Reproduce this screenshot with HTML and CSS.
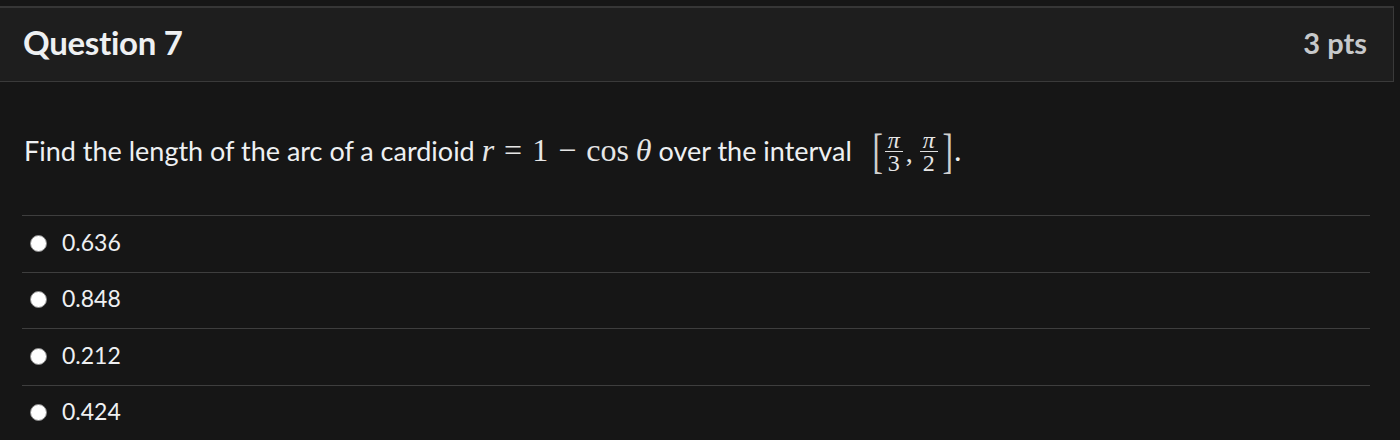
FILE: index.html
```html
<!DOCTYPE html>
<html>
<head>
<meta charset="utf-8">
<link rel="stylesheet" href="styles.css">
</head>
<body>
<div class="question">
  <div class="header">
    <h2 class="title">Question 7</h2>
    <span class="pts">3 pts</span>
  </div>
  <div class="content">
    <p class="text">Find the length of the arc of a cardioid <span class="math"><i>r</i><span class="op">=</span>1<span class="op">−</span>cos<span class="sp"></span><i>θ</i></span> over the interval <span class="math interval"><span class="brk brk-l">[</span><span class="frac"><span class="num"><i>π</i></span><span class="den">3</span></span><span class="comma">,</span><span class="frac"><span class="num"><i>π</i></span><span class="den">2</span></span><span class="brk brk-r">]</span></span><span class="dot">.</span></p>
    <div class="answers">
      <div class="answer"><span class="radio"></span><span class="label">0.636</span></div>
      <div class="answer"><span class="radio"></span><span class="label">0.848</span></div>
      <div class="answer"><span class="radio"></span><span class="label">0.212</span></div>
      <div class="answer"><span class="radio"></span><span class="label">0.424</span></div>
    </div>
  </div>
</div>
</body>
</html>
```
FILE: styles.css
```css
html, body {
  margin: 0;
  padding: 0;
  background: #161616;
  color: #ecedee;
  font-family: Lato, "Liberation Sans", sans-serif;
}
body {
  padding-top: 6px;
}
.question {
  width: 1394px;
}
.header {
  display: flex;
  align-items: center;
  justify-content: space-between;
  height: 76px;
  box-sizing: border-box;
  background: #1e1e1e;
  border-top: 2px solid #363636;
  border-bottom: 1px solid #3a3a3a;
  border-right: 1px solid #3a3a3a;
  padding: 0 26px 5px 23px;
}
.title {
  margin: 0;
  font-size: 33px;
  font-weight: 700;
  color: #eef0f2;
  letter-spacing: -0.3px;
}
.pts {
  font-size: 29px;
  font-weight: 700;
  color: #c7c9cb;
}
.content {
  padding: 0 24px 0 22px;
}
.text {
  margin: 0;
  padding: 48px 0 45px 2px;
  font-size: 27px;
  line-height: 40px;
  height: 40px;
  white-space: nowrap;
  color: #eef0f2;
}
.math {
  font-family: "Liberation Serif", "DejaVu Serif", serif;
  font-size: 32px;
  color: #e6e6e6;
}
.math i {
  font-style: italic;
}
.op {
  margin: 0 10px;
}
.sp {
  display: inline-block;
  width: 7px;
}
.interval {
  display: inline-flex;
  align-items: center;
  vertical-align: middle;
  margin-left: 12px;
  position: relative;
  top: -3px;
  height: 40px;
}
.brk {
  display: inline-block;
  font-size: 48px;
  font-weight: 300;
  line-height: 40px;
  width: 9px;
  transform: scaleX(0.65);
  transform-origin: center;
  color: #cfcfcf;
  text-align: center;
}
.brk-l {
  margin-right: 4px;
}
.brk-r {
  margin-left: 2px;
}
.frac {
  display: inline-flex;
  flex-direction: column;
  align-items: center;
  font-size: 24px;
  line-height: 18px;
  margin: 0 1px;
}
.num {
  border-bottom: 1px solid #e0e0e0;
  padding: 0 3px 2px;
}
.den {
  padding-top: 2px;
}
.comma {
  font-size: 28px;
  align-self: center;
  margin: 0 6px 0 2px;
  position: relative;
  top: 2px;
}
.dot {
  font-family: "Liberation Serif", serif;
  font-size: 32px;
  margin-left: 4px;
}
.answers {
  display: flex;
  flex-direction: column;
}
.answer {
  display: flex;
  align-items: center;
  height: 57px;
  box-sizing: border-box;
  border-top: 1px solid #3e3e3e;
  font-size: 23px;
  color: #eef0f2;
}
.answer:nth-child(2), .answer:nth-child(4) {
  height: 56px;
}
.radio {
  width: 15px;
  height: 15px;
  border-radius: 50%;
  background: #ffffff;
  border: 1px solid #8a8a8a;
  margin: 0 15px 0 8px;
  flex-shrink: 0;
  position: relative;
  top: -1px;
}
.label {
  line-height: 1;
  position: relative;
  top: -2px;
}
```
